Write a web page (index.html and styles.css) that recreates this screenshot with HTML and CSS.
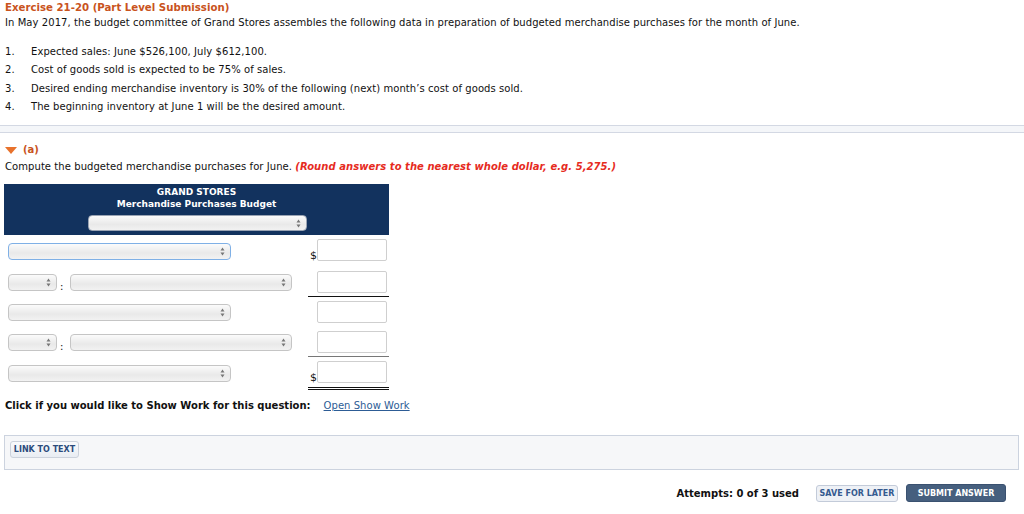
FILE: index.html
```html
<!DOCTYPE html>
<html>
<head>
<meta charset="utf-8">
<link rel="stylesheet" href="styles.css">
</head>
<body>
<div class="page">
  <h1 class="title">Exercise 21-20 (Part Level Submission)</h1>
  <p class="intro">In May 2017, the budget committee of Grand Stores assembles the following data in preparation of budgeted merchandise purchases for the month of June.</p>
  <ol class="facts">
    <li><span class="num">1.</span><span>Expected sales: June $526,100, July $612,100.</span></li>
    <li><span class="num">2.</span><span>Cost of goods sold is expected to be 75% of sales.</span></li>
    <li><span class="num">3.</span><span>Desired ending merchandise inventory is 30% of the following (next) month’s cost of goods sold.</span></li>
    <li><span class="num">4.</span><span>The beginning inventory at June 1 will be the desired amount.</span></li>
  </ol>
</div>
<div class="band"></div>
<div class="page">
  <div class="part"><span class="tri"></span><span>(a)</span></div>
  <p class="prompt">Compute the budgeted merchandise purchases for June. <em class="hint">(Round answers to the nearest whole dollar, e.g. 5,275.)</em></p>

  <div class="budget">
    <div class="bhead">
      <div class="bt">GRAND STORES</div>
      <div class="bt">Merchandise Purchases Budget</div>
      <div class="sel sel-head"><svg class="arr" viewBox="0 0 5 9"><path d="M2.5 0.5 L4.5 3.5 L0.5 3.5 Z M2.5 8.5 L4.5 5.5 L0.5 5.5 Z" fill="#777"/></svg></div>
    </div>

    <div class="brow r1">
      <div class="left"><div class="sel sel-wide focus"><svg class="arr" viewBox="0 0 5 9"><path d="M2.5 0.5 L4.5 3.5 L0.5 3.5 Z M2.5 8.5 L4.5 5.5 L0.5 5.5 Z" fill="#777"/></svg></div></div>
      <div class="right"><span class="dol">$</span><span class="inp"></span></div>
    </div>
    <div class="brow r2 under">
      <div class="left"><div class="sel sel-small"><svg class="arr" viewBox="0 0 5 9"><path d="M2.5 0.5 L4.5 3.5 L0.5 3.5 Z M2.5 8.5 L4.5 5.5 L0.5 5.5 Z" fill="#777"/></svg></div><span class="colon">:</span><div class="sel sel-long"><svg class="arr" viewBox="0 0 5 9"><path d="M2.5 0.5 L4.5 3.5 L0.5 3.5 Z M2.5 8.5 L4.5 5.5 L0.5 5.5 Z" fill="#777"/></svg></div></div>
      <div class="right"><span class="inp"></span></div>
    </div>
    <div class="brow r3">
      <div class="left"><div class="sel sel-wide"><svg class="arr" viewBox="0 0 5 9"><path d="M2.5 0.5 L4.5 3.5 L0.5 3.5 Z M2.5 8.5 L4.5 5.5 L0.5 5.5 Z" fill="#777"/></svg></div></div>
      <div class="right"><span class="inp"></span></div>
    </div>
    <div class="brow r4 under-gray">
      <div class="left"><div class="sel sel-small"><svg class="arr" viewBox="0 0 5 9"><path d="M2.5 0.5 L4.5 3.5 L0.5 3.5 Z M2.5 8.5 L4.5 5.5 L0.5 5.5 Z" fill="#777"/></svg></div><span class="colon">:</span><div class="sel sel-long"><svg class="arr" viewBox="0 0 5 9"><path d="M2.5 0.5 L4.5 3.5 L0.5 3.5 Z M2.5 8.5 L4.5 5.5 L0.5 5.5 Z" fill="#777"/></svg></div></div>
      <div class="right"><span class="inp"></span></div>
    </div>
    <div class="brow r5 double">
      <div class="left"><div class="sel sel-wide"><svg class="arr" viewBox="0 0 5 9"><path d="M2.5 0.5 L4.5 3.5 L0.5 3.5 Z M2.5 8.5 L4.5 5.5 L0.5 5.5 Z" fill="#777"/></svg></div></div>
      <div class="right"><span class="dol">$</span><span class="inp"></span></div>
    </div>
  </div>

  <p class="showwork"><b>Click if you would like to Show Work for this question:</b><a class="link" href="#">Open Show Work</a></p>

  <div class="panel"><span class="btn-link">LINK TO TEXT</span></div>

  <div class="footer">
    <b class="attempts">Attempts: 0 of 3 used</b>
    <span class="btn-save">SAVE FOR LATER</span>
    <span class="btn-submit">SUBMIT ANSWER</span>
  </div>
</div>
</body>
</html>
```

FILE: styles.css
```css
* { box-sizing: border-box; }
html, body { margin: 0; padding: 0; background: #fff; }
body {
  font-family: "DejaVu Sans", Verdana, sans-serif;
  font-size: 10px;
  color: #111;
}
.page { padding: 0 5px 0 4px; }
.title {
  margin: 0;
  padding-left: 1px;
  font-size: 10.2px;
  line-height: 15px;
  font-weight: bold;
  color: #c9531d;
}
.intro { margin: 0; padding-left: 1px; line-height: 16px; letter-spacing: 0.07px; }
.facts { list-style: none; margin: 12px 0 0 0; padding: 0 0 0 1px; letter-spacing: 0.07px; }
.facts li { display: flex; line-height: 18.3px; }
.facts .num { width: 26px; flex: none; }
.band {
  margin-top: 9px;
  height: 8px;
  background: #f4f6f9;
  border-top: 1px solid #d3d8e3;
  border-bottom: 1px solid #d3d8e3;
}
.part {
  margin-top: 10px;
  padding-left: 1px;
  display: flex;
  align-items: center;
  gap: 6px;
  line-height: 14px;
  font-weight: bold;
  color: #c9531d;
}
.tri {
  width: 0; height: 0;
  border-left: 6px solid transparent;
  border-right: 6px solid transparent;
  border-top: 7px solid #e8722c;
}
.prompt { margin: 3px 0 0 0; padding-left: 1px; line-height: 14px; letter-spacing: 0.07px; }
.hint { font-weight: bold; font-style: italic; color: #e62b1e; letter-spacing: 0.05px; }

.budget { width: 385px; margin-top: 10px; }
.bhead {
  background: #12325e;
  height: 51px;
  padding-top: 2px;
  display: flex;
  flex-direction: column;
  align-items: center;
}
.bt { color: #fff; font-weight: bold; line-height: 12px; font-size: 9px; }
.sel {
  position: relative;
  height: 17px;
  border: 1px solid #c5c5c5;
  border-radius: 4px;
  background: linear-gradient(#fbfbfb, #e9e9e9 60%, #f2f2f2);
}
.sel .arr { position: absolute; right: 5px; top: 3px; width: 5px; height: 9px; }
.sel-head { width: 219px; height: 16px; margin-top: 5px; margin-left: 1px; border-color: #9aa4b4; }
.sel-wide { width: 223px; }
.sel-small { width: 49px; }
.sel-long { width: 222px; }
.sel.focus { border-color: #7fb0e6; }

.brow { display: flex; justify-content: space-between; }
.brow .left { display: flex; align-items: center; padding-left: 4px; }
.brow .right {
  width: 81px;
  display: flex;
  align-items: flex-end;
  justify-content: flex-end;
  padding: 4px 2px 4px 0;
}
.inp {
  display: block;
  width: 70px;
  height: 22px;
  border: 1px solid #cfcfcf;
  border-radius: 2px;
  background: #fff;
}
.dol { font-size: 11px; line-height: 12px; margin-bottom: -1px; }
.colon { width: 13px; align-self: flex-end; padding: 0 0 2px 3px; margin-bottom: 3px; }
.r1 .left { padding-top: 1px; }
.r1 .right { padding-bottom: 6px; }
.under .right { border-bottom: 1px solid #111; padding-bottom: 3px; }
.under-gray .right { border-bottom: 1px solid #777; padding-bottom: 3px; }
.double .right { border-bottom: 3px double #111; padding-bottom: 4px; }

.showwork { margin: 9px 0 0 0; padding-left: 1px; line-height: 14px; }
.link { margin-left: 13px; color: #2d5c95; text-decoration: underline; letter-spacing: 0.05px; }

.panel {
  margin-top: 22px;
  height: 35px;
  background: #f6f7f9;
  border: 1px solid #ccd3df;
  padding: 5px 0 0 5px;
}
.btn-link, .btn-save, .btn-submit {
  display: inline-flex;
  align-items: center;
  justify-content: center;
  font-size: 8px;
  font-weight: bold;
  border-radius: 3px;
}
.btn-link {
  width: 69px;
  height: 17px;
  color: #2c4b7c;
  border: 1px solid #ccd2dc;
  background: linear-gradient(#f9fafc, #e9edf3);
}
.footer {
  margin-top: 14px;
  display: flex;
  justify-content: flex-end;
  align-items: center;
  padding-right: 13px;
}
.attempts { font-size: 10px; margin-right: 17px; }
.btn-save {
  width: 82px;
  height: 17px;
  color: #355a8f;
  border: 1px solid #c3cbd9;
  background: #eef1f6;
  margin-right: 8px;
}
.btn-submit {
  width: 100px;
  height: 18px;
  color: #fff;
  background: #465f7e;
  border: 1px solid #3a5170;
}
```
